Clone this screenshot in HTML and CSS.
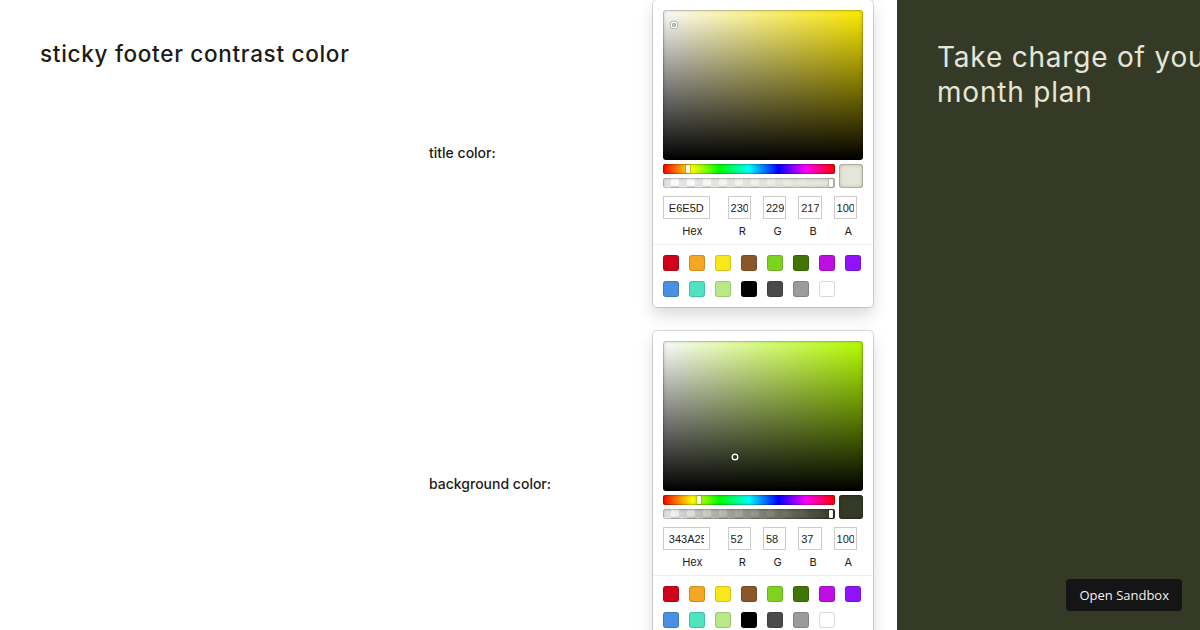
FILE: index.html
```html
<!DOCTYPE html>
<html lang="en">
<head>
<meta charset="utf-8">
<title>sticky footer contrast color</title>
<link rel="stylesheet" href="styles.css">
</head>
<body>
<div class="app">
  <div class="editor">
    <div class="intro">
      <h1 class="title">sticky footer contrast color</h1>
    </div>
    <div class="form">
      <label class="field-label">title color:</label>
      <div class="sketch">
        <div class="saturation" style="background-color:hsl(55.4,100%,50%)">
          <div class="sat-pointer" style="left:5.65%;top:9.8%"></div>
        </div>
        <div class="controls">
          <div class="sliders">
            <div class="hue"><div class="slider-pointer" style="left:15.38%"></div></div>
            <div class="alpha" style="--rgb:230,229,217"><div class="slider-pointer" style="left:calc(100% - 3px)"></div></div>
          </div>
          <div class="active-color" style="background-color:#E6E5D9"></div>
        </div>
        <div class="fields">
          <div class="fld double"><input class="fld-input" value="E6E5D9"><span class="fld-label">Hex</span></div>
          <div class="fld single"><input class="fld-input" value="230"><span class="fld-label">R</span></div>
          <div class="fld single"><input class="fld-input" value="229"><span class="fld-label">G</span></div>
          <div class="fld single"><input class="fld-input" value="217"><span class="fld-label">B</span></div>
          <div class="fld single"><input class="fld-input" value="100"><span class="fld-label">A</span></div>
        </div>
        <div class="presets">
          <div class="swatch" style="background:#D0021B"></div>
          <div class="swatch" style="background:#F5A623"></div>
          <div class="swatch" style="background:#F8E71C"></div>
          <div class="swatch" style="background:#8B572A"></div>
          <div class="swatch" style="background:#7ED321"></div>
          <div class="swatch" style="background:#417505"></div>
          <div class="swatch" style="background:#BD10E0"></div>
          <div class="swatch" style="background:#9013FE"></div>
          <div class="swatch" style="background:#4A90E2"></div>
          <div class="swatch" style="background:#50E3C2"></div>
          <div class="swatch" style="background:#B8E986"></div>
          <div class="swatch" style="background:#000000"></div>
          <div class="swatch" style="background:#4A4A4A"></div>
          <div class="swatch" style="background:#9B9B9B"></div>
          <div class="swatch" style="background:#FFFFFF"></div>
        </div>
      </div>

      <label class="field-label">background color:</label>
      <div class="sketch">
        <div class="saturation" style="background-color:hsl(77.1,100%,50%)">
          <div class="sat-pointer" style="left:36.2%;top:77.25%"></div>
        </div>
        <div class="controls">
          <div class="sliders">
            <div class="hue"><div class="slider-pointer" style="left:21.43%"></div></div>
            <div class="alpha" style="--rgb:52,58,37"><div class="slider-pointer" style="left:calc(100% - 3px)"></div></div>
          </div>
          <div class="active-color" style="background-color:#343A25"></div>
        </div>
        <div class="fields">
          <div class="fld double"><input class="fld-input" value="343A25"><span class="fld-label">Hex</span></div>
          <div class="fld single"><input class="fld-input" value="52"><span class="fld-label">R</span></div>
          <div class="fld single"><input class="fld-input" value="58"><span class="fld-label">G</span></div>
          <div class="fld single"><input class="fld-input" value="37"><span class="fld-label">B</span></div>
          <div class="fld single"><input class="fld-input" value="100"><span class="fld-label">A</span></div>
        </div>
        <div class="presets">
          <div class="swatch" style="background:#D0021B"></div>
          <div class="swatch" style="background:#F5A623"></div>
          <div class="swatch" style="background:#F8E71C"></div>
          <div class="swatch" style="background:#8B572A"></div>
          <div class="swatch" style="background:#7ED321"></div>
          <div class="swatch" style="background:#417505"></div>
          <div class="swatch" style="background:#BD10E0"></div>
          <div class="swatch" style="background:#9013FE"></div>
          <div class="swatch" style="background:#4A90E2"></div>
          <div class="swatch" style="background:#50E3C2"></div>
          <div class="swatch" style="background:#B8E986"></div>
          <div class="swatch" style="background:#000000"></div>
          <div class="swatch" style="background:#4A4A4A"></div>
          <div class="swatch" style="background:#9B9B9B"></div>
          <div class="swatch" style="background:#FFFFFF"></div>
        </div>
      </div>
    </div>
  </div>
  <div class="preview">
    <p class="preview-text">Take charge of your month plan</p>
  </div>
</div>
<a class="sandbox-btn" href="#">Open Sandbox</a>
</body>
</html>
```

FILE: styles.css
```css
html, body {
  margin: 0;
  padding: 0;
  height: 100%;
  overflow: hidden;
}

body {
  font-family: Inter, "Noto Sans", sans-serif;
  color: #1d1b1a;
  background: #fff;
}

.app {
  display: flex;
  height: 100vh;
  overflow: hidden;
}

.editor {
  width: 897px;
  flex: none;
  display: flex;
  align-items: flex-start;
}

.intro {
  width: 429px;
  flex: none;
  box-sizing: border-box;
  padding: 40px 0 0 40px;
}

.title {
  margin: 0;
  font-size: 22.5px;
  line-height: 28px;
  font-weight: 500;
  letter-spacing: 0.7px;
  color: #1d1b1a;
}

.form {
  display: grid;
  grid-template-columns: 200px 220px;
  column-gap: 24px;
  row-gap: 24px;
  align-items: center;
  padding-right: 24px;
}

.field-label {
  font-size: 14px;
  font-weight: 500;
  color: #1d1b1a;
  transform: translateY(-1px);
}

/* Sketch colour picker */
.sketch {
  width: 200px;
  padding: 10px 10px 0;
  background: #fff;
  border-radius: 4px;
  box-shadow: 0 0 0 1px rgba(0, 0, 0, .15), 0 8px 16px rgba(0, 0, 0, .15);
}

.saturation {
  position: relative;
  height: 150px;
  border-radius: 3px;
  background-image:
    linear-gradient(to top, #000, rgba(0, 0, 0, 0)),
    linear-gradient(to right, #fff, rgba(255, 255, 255, 0));
  box-shadow: inset 0 0 0 1px rgba(0, 0, 0, .15), inset 0 0 4px rgba(0, 0, 0, .25);
}

.sat-pointer {
  position: absolute;
  width: 4px;
  height: 4px;
  border-radius: 50%;
  transform: translate(-2px, -2px);
  box-shadow: 0 0 0 1.5px #fff, inset 0 0 1px 1px rgba(0, 0, 0, .3), 0 0 1px 2px rgba(0, 0, 0, .4);
}

.controls {
  display: flex;
}

.sliders {
  flex: 1;
  padding: 4px 0;
}

.hue, .alpha {
  position: relative;
  height: 10px;
  border-radius: 2px;
  box-shadow: inset 0 0 0 1px rgba(0, 0, 0, .15), inset 0 0 4px rgba(0, 0, 0, .25);
}

.hue {
  background: linear-gradient(to right, #f00 0%, #ff0 17%, #0f0 33%, #0ff 50%, #00f 67%, #f0f 83%, #f00 100%);
}

.alpha {
  margin-top: 4px;
  background-image:
    linear-gradient(to right, rgba(var(--rgb), 0), rgb(var(--rgb))),
    conic-gradient(#fff 0 25%, #e6e6e6 0 50%, #fff 0 75%, #e6e6e6 0);
  background-size: 100% 100%, 16px 16px;
}

.slider-pointer {
  position: absolute;
  top: 0;
  width: 4px;
  height: 8px;
  margin-top: 1px;
  border-radius: 1px;
  background: #fff;
  box-shadow: 0 0 2px rgba(0, 0, 0, .6);
  transform: translateX(-3px);
}

.active-color {
  width: 24px;
  height: 24px;
  margin: 4px 0 0 4px;
  border-radius: 3px;
  box-shadow: inset 0 0 0 1px rgba(0, 0, 0, .15), inset 0 0 4px rgba(0, 0, 0, .25);
}

.fields {
  display: flex;
  padding-top: 4px;
}

.fld {
  display: flex;
  flex-direction: column;
  min-width: 0;
}

.double {
  flex: 2;
}

.single {
  flex: 1;
  padding-left: 6px;
}

.fld-input {
  box-sizing: border-box;
  width: 80%;
  height: 23px;
  padding: 4px 10% 3px;
  margin: 0;
  border: none;
  outline: none;
  box-shadow: inset 0 0 0 1px #ccc;
  font-family: "Liberation Sans", Arial, sans-serif;
  font-size: 11px;
  line-height: 16px;
  color: #222;
  background: #fff;
  border-radius: 0;
}

.fld-label {
  display: block;
  text-align: center;
  font-size: 11px;
  line-height: 18px;
  color: #222;
  padding: 3px 0 4px;
}

.presets {
  display: flex;
  flex-wrap: wrap;
  margin: 0 -10px;
  padding: 10px 0 0 10px;
  border-top: 1px solid #eee;
}

.swatch {
  width: 16px;
  height: 16px;
  margin: 0 10px 10px 0;
  border-radius: 3px;
  box-shadow: inset 0 0 0 1px rgba(0, 0, 0, .15);
}

/* Preview */
.preview {
  flex: 1;
  background: #343A25;
  padding: 40px 0 0 40px;
  overflow: hidden;
}

.preview-text {
  margin: 0;
  width: 340px;
  font-size: 28px;
  line-height: 35px;
  font-weight: 400;
  letter-spacing: 0.8px;
  color: #E6E5D9;
}

.sandbox-btn {
  position: fixed;
  right: 18px;
  bottom: 19px;
  height: 32px;
  padding: 0 13px;
  display: flex;
  align-items: center;
  border-radius: 4px;
  background: #151515;
  color: #f2f2f2;
  font-family: "Open Sans", sans-serif;
  font-size: 13px;
  font-weight: 500;
  text-decoration: none;
}
```
